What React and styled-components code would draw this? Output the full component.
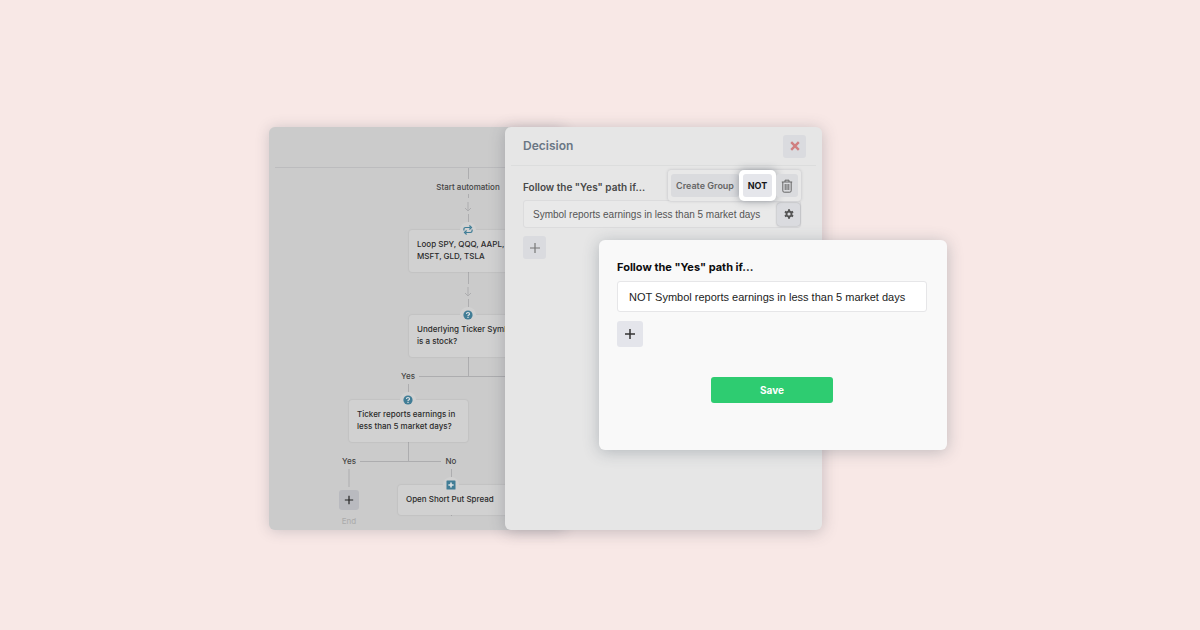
import React, { useState } from 'react'
import styled, { createGlobalStyle } from 'styled-components'

const branches = [
  { id: 'loop', icon: 'loop', x: 140, y: 103, width: 119, iconX: 59, lines: ['Loop SPY, QQQ, AAPL,', 'MSFT, GLD, TSLA'] },
  { id: 'stock', icon: 'question', x: 140, y: 188, width: 119, iconX: 59, lines: ['Underlying Ticker Symbol', 'is a stock?'] },
  { id: 'earnings', icon: 'question', x: 80, y: 273, width: 119, iconX: 59, lines: ['Ticker reports earnings in', 'less than 5 market days?'] },
  { id: 'spread', icon: 'plus', x: 129, y: 358, width: 119, iconX: 53, lines: ['Open Short Put Spread'] },
]

const labels = [
  { text: 'Start automation', x: 199, y: 60 },
  { text: 'Yes', x: 139, y: 249 },
  { text: 'Yes', x: 80, y: 334 },
  { text: 'No', x: 182, y: 334 },
  { text: 'End', x: 80, y: 394, faded: true },
]

const PlusIcon = ({ size = 12, weight = 1.4 }) => (
  <svg width={size} height={size} viewBox="0 0 12 12" fill="none" stroke="currentColor" strokeWidth={weight}>
    <path d="M6 1v10M1 6h10" />
  </svg>
)

const CloseIcon = () => (
  <svg width="10" height="10" viewBox="0 0 10 10" fill="none" stroke="currentColor" strokeWidth="2.4">
    <path d="M1.2 1.2l7.6 7.6M8.8 1.2L1.2 8.8" />
  </svg>
)

const TrashIcon = () => (
  <svg width="12" height="14" viewBox="0 0 12 14" fill="none" stroke="currentColor" strokeWidth="1">
    <path d="M0.8 3h10.4M4 3V1.2h4V3M1.8 3v8.8q0 1.4 1.4 1.4h5.6q1.4 0 1.4-1.4V3M4.2 5v6M6 5v6M7.8 5v6" />
  </svg>
)

const GearIcon = () => (
  <svg width="10" height="10" viewBox="0 0 10 10" fill="none" stroke="currentColor">
    <circle cx="5" cy="5" r="2.5" strokeWidth="1.8" />
    <path d="M5 .3v1.9M5 7.8v1.9M.93 2.65l1.65.95M7.42 6.4l1.65.95M.93 7.35l1.65-.95M7.42 3.6l1.65-.95" strokeWidth="2" />
  </svg>
)

const NodeIcon = ({ type }) => {
  if (type === 'loop') {
    return (
      <svg width="10" height="10" viewBox="0 0 10 10" fill="none" stroke="#3f7d96" strokeWidth="1.2">
        <path d="M.9 5.6V4.2q0-1.7 1.7-1.7h5M9.1 4.4v1.4q0 1.7-1.7 1.7h-5" />
        <path d="M6.4.5l2.1 2-2.1 2M3.6 5.5l-2.1 2 2.1 2" />
      </svg>
    )
  }
  if (type === 'plus') {
    return (
      <svg width="10" height="10" viewBox="0 0 10 10">
        <rect x=".5" y=".5" width="9" height="9" rx=".6" fill="#417d96" />
        <path d="M5 2.4v5.2M2.4 5h5.2" stroke="#dfe3e5" strokeWidth="1.6" />
      </svg>
    )
  }
  return (
    <svg width="10" height="10" viewBox="0 0 10 10" fill="none">
      <circle cx="5" cy="5" r="4.6" fill="#417d96" />
      <path d="M3.5 4q0-1.5 1.5-1.5T6.5 3.9q0 .8-.8 1.1-.7.3-.7.9M5 6.8v1.1" stroke="#dfe3e5" strokeWidth="1.2" />
    </svg>
  )
}

const Connectors = () => (
  <Lines viewBox="0 0 236 403" width="236" height="403">
    <path d="M199.500 41v11M199.500 67v4M199.500 87v8M199.500 145v12M199.500 172v8M199.500 230v19" />
    <path d="M199 75v9M196 81l3 3 3-3M199 160v9M196 166l3 3 3-3" />
    <path d="M150 249.500h86M139.500 257v8M139.500 315v19M91 334.500h81" />
    <path d="M80 342v18M182.500 342v8M182.500 388v1" />
  </Lines>
)

const FlowNode = ({ node }) => (
  <Node $x={node.x} $y={node.y} $width={node.width}>
    <Badge $x={node.iconX}><NodeIcon type={node.icon} /></Badge>
    {node.lines.map((line) => <span key={line}>{line}</span>)}
  </Node>
)

const App = () => {
  const [condition, setCondition] = useState('Symbol reports earnings in less than 5 market days')
  const [result, setResult] = useState('NOT Symbol reports earnings in less than 5 market days')

  return (
    <Page>
      <GlobalStyle />
      <Stage>
        <Canvas>
          <CanvasHeader />
          <Connectors />
          {branches.map((node) => <FlowNode key={node.id} node={node} />)}
          {labels.map((item) => (
            <FlowLabel key={`${item.text}-${item.x}`} $x={item.x} $y={item.y} $faded={item.faded}>{item.text}</FlowLabel>
          ))}
          <AddStep type="button" aria-label="Add step"><PlusIcon size={10} /></AddStep>
        </Canvas>

        <Decision>
          <DecisionHeader>
            <h2>Decision</h2>
            <IconButton type="button" aria-label="Close" $tone="#d07f80"><CloseIcon /></IconButton>
          </DecisionHeader>
          <DecisionBody>
            <FieldLabel htmlFor="condition">Follow the "Yes" path if...</FieldLabel>
            <ConditionRow>
              <input id="condition" value={condition} onChange={(e) => setCondition(e.target.value)} />
              <IconButton type="button" aria-label="Settings" $outlined><GearIcon /></IconButton>
            </ConditionRow>
            <IconButton type="button" aria-label="Add condition" $tone="#777"><PlusIcon weight={1.2} /></IconButton>
            <Toolbar>
              <ToolButton type="button">Create Group</ToolButton>
              <Spotlight><ToolButton type="button" $active>NOT</ToolButton></Spotlight>
              <ToolButton type="button" aria-label="Delete"><TrashIcon /></ToolButton>
            </Toolbar>
          </DecisionBody>
        </Decision>

        <Popup onSubmit={(e) => e.preventDefault()}>
          <FieldLabel htmlFor="result" $large>Follow the "Yes" path if...</FieldLabel>
          <ResultInput id="result" value={result} onChange={(e) => setResult(e.target.value)} />
          <IconButton type="button" aria-label="Add condition" $large><PlusIcon weight={1.5} /></IconButton>
          <SaveButton>Save</SaveButton>
        </Popup>
      </Stage>
    </Page>
  )
}

const GlobalStyle = createGlobalStyle`
  * {
    box-sizing: border-box;
  }
  body {
    margin: 0;
    background: #f8e8e6;
  }
  body, button {
    font-family: Inter, "Liberation Sans", sans-serif;
  }
  input {
    font-family: "Liberation Sans", Arial, sans-serif;
  }
  button {
    display: flex;
    align-items: center;
    justify-content: center;
    padding: 0;
    border: 0;
    cursor: pointer;
  }
  svg {
    display: block;
    flex: none;
  }
`

const Page = styled.main`
  display: flex;
  align-items: center;
  justify-content: center;
  min-height: 100vh;
  padding: 27px 0 0 16px;
`

const Stage = styled.div`
  position: relative;
  display: grid;
  grid-template-columns: 236px 317px 1fr;
  width: 100%;
  max-width: 678px;
  min-height: 403px;
`

const Canvas = styled.section`
  position: relative;
  margin-right: -60px;
  border-radius: 6px;
  background: #cbcbcb;
  box-shadow: 0 1px 14px rgba(60, 65, 80, 0.22);
`

const CanvasHeader = styled.div`
  height: 41px;
  margin-left: 6px;
  border-bottom: 1px solid #bcbcbe;
`

const Lines = styled.svg`
  position: absolute;
  top: 0;
  left: 0;
  fill: none;
  stroke: #adadaf;
`

const Node = styled.div`
  position: absolute;
  left: ${({ $x }) => $x}px;
  top: ${({ $y }) => $y}px;
  display: flex;
  flex-direction: column;
  width: ${({ $width }) => $width}px;
  padding: 8px 8px 10px;
  border-radius: 3px;
  background: #d1d1d1;
  box-shadow: 0 0 2px rgba(0, 0, 0, 0.14);
  color: #2a2a2a;
  font-size: 8px;
  font-weight: 500;
  line-height: 12px;
  white-space: nowrap;
`

const Badge = styled.div`
  position: absolute;
  left: ${({ $x }) => $x - 8}px;
  top: -8px;
  display: flex;
  align-items: center;
  justify-content: center;
  width: 16px;
  height: 16px;
  border-radius: 50%;
  background: #d1d1d1;
`

const FlowLabel = styled.span`
  position: absolute;
  left: ${({ $x }) => $x}px;
  top: ${({ $y }) => $y}px;
  transform: translate(-50%, -50%);
  color: ${({ $faded }) => ($faded ? '#aaa' : '#444')};
  font-size: 8px;
  font-weight: ${({ $faded }) => ($faded ? 400 : 500)};
  line-height: 12px;
  white-space: nowrap;
`

const AddStep = styled.button`
  position: absolute;
  left: 70px;
  top: 363px;
  width: 20px;
  height: 20px;
  border-radius: 3px;
  background: #b9babf;
  color: #222;
`

const Decision = styled.section`
  position: relative;
  border-radius: 6px;
  background: #e6e6e6;
  box-shadow: 0 2px 16px rgba(60, 65, 80, 0.28);
`

const DecisionHeader = styled.header`
  display: flex;
  align-items: center;
  justify-content: space-between;
  height: 39px;
  margin: 0 6px;
  padding: 0 10px 0 12px;
  border-bottom: 1px solid #dcdddd;
  h2 {
    margin: 0;
    color: #6a7684;
    font-size: 12px;
    font-weight: 600;
    line-height: 16px;
  }
`

const DecisionBody = styled.div`
  position: relative;
  display: flex;
  flex-direction: column;
  align-items: flex-start;
  padding: 13px 21px 0 18px;
`

const FieldLabel = styled.label`
  margin-bottom: ${({ $large }) => ($large ? 6 : 5)}px;
  color: ${({ $large }) => ($large ? '#0c0c0e' : '#484848')};
  font-size: ${({ $large }) => ($large ? 11 : 10)}px;
  font-weight: ${({ $large }) => ($large ? 700 : 600)};
  line-height: 16px;
`

const ConditionRow = styled.div`
  display: flex;
  align-items: center;
  width: 100%;
  height: 28px;
  margin-bottom: 8px;
  border: 1px solid #dcdcdd;
  border-radius: 3px;
  background: #e9e9e9;
  input {
    flex: 1;
    min-width: 0;
    padding: 0 0 0 9px;
    border: 0;
    outline: none;
    background: none;
    color: #555;
    font-size: 10px;
  }
`

const IconButton = styled.button`
  flex: none;
  width: ${({ $large }) => ($large ? 26 : 23)}px;
  height: ${({ $large }) => ($large ? 26 : 23)}px;
  border-radius: 3px;
  background: ${({ $large }) => ($large ? '#e4e5eb' : '#dadbdf')};
  color: ${({ $tone }) => $tone || '#333'};
  ${({ $outlined }) => $outlined && `
    color: #555;
    box-shadow: 0 0 2px rgba(60, 65, 80, 0.5);
  `}
`

const Toolbar = styled.div`
  position: absolute;
  top: 4px;
  right: 21px;
  display: flex;
  align-items: center;
  width: 133px;
  height: 31px;
  padding: 3px;
  border-radius: 3px;
  background: #e8e8e8;
  box-shadow: 0 0 3px rgba(60, 65, 80, 0.25);
`

const ToolButton = styled.button`
  flex: 1 0 auto;
  height: 23px;
  border-radius: 3px;
  background: ${({ $active }) => ($active ? '#e5e6eb' : '#dadbde')};
  color: ${({ $active }) => ($active ? '#17171a' : '#666')};
  font-size: 9px;
  font-weight: ${({ $active }) => ($active ? 700 : 600)};
`

const Spotlight = styled.div`
  display: flex;
  width: 37px;
  height: 31px;
  padding: 4px;
  border-radius: 5px;
  background: #fff;
  box-shadow: 0 0 8px rgba(40, 50, 65, 0.4);
`

const Popup = styled.form`
  position: absolute;
  top: 113px;
  left: 330px;
  right: 0;
  display: flex;
  flex-direction: column;
  align-items: flex-start;
  padding: 19px 20px 47px 18px;
  border-radius: 6px;
  background: #f9f9f9;
  box-shadow: 0 2px 16px rgba(60, 75, 90, 0.3);
`

const ResultInput = styled.input`
  width: 100%;
  height: 31px;
  margin-bottom: 9px;
  padding: 0 11px;
  border: 1px solid #e6e6e8;
  border-radius: 3px;
  outline: none;
  background: #fff;
  color: #1c1c1c;
  font-size: 11px;
`

const SaveButton = styled.button`
  align-self: center;
  width: 122px;
  height: 26px;
  margin-top: 30px;
  border-radius: 3px;
  background: #2ecc71;
  color: #fff;
  font-size: 10px;
  font-weight: 700;
`

export default App
